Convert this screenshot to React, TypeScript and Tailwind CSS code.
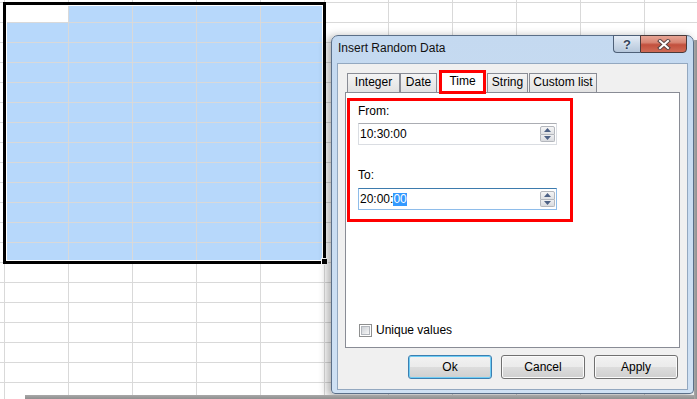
import React from "react";

const ROWS = 21;
const COLS = 12;

function cellClass(r: number, c: number) {
  if (r === 1 && c === 1) return "border-r border-b border-[#d9d9d9] bg-white";
  if (r >= 1 && r <= 13 && c >= 1 && c <= 5) return "border-r border-b border-[#d9d9d9] bg-[#b7d8fb]";
  return "border-r border-b border-[#d9d9d9] bg-white";
}

function Sheet() {
  const cells = [];
  for (let r = 0; r < ROWS; r++) {
    for (let c = 0; c < COLS; c++) {
      cells.push(<div key={`${r}-${c}`} className={cellClass(r, c)} />);
    }
  }
  return (
    <div className="relative">
      <div className="grid grid-cols-[5px_repeat(11,64px)] grid-rows-[3px_repeat(20,20px)]">{cells}</div>
      {/* selection outline + fill handle */}
      <div className="absolute left-[3px] top-[2px] h-[262px] w-[323px] border-[3px] border-black shadow-[inset_0_0_0_1px_#ffffff]" />
      <div className="absolute left-[321px] top-[258px] h-[7px] w-[7px] border border-white bg-black" />
    </div>
  );
}

function Spin() {
  return (
    <div className="mr-[1px] flex h-[16px] w-[15px] flex-col">
      <div className="flex flex-1 items-center justify-center rounded-t-[2px] border border-[#b4b7bd] bg-linear-to-b from-[#f5f5f5] to-[#dfe1e4]">
        <svg width="7" height="4" viewBox="0 0 7 4">
          <path d="M0 4 L3.5 0 L7 4 Z" fill="#4d6185" />
        </svg>
      </div>
      <div className="flex flex-1 items-center justify-center rounded-b-[2px] border border-t-0 border-[#b4b7bd] bg-linear-to-b from-[#eeeff1] to-[#d9dbdf]">
        <svg width="7" height="4" viewBox="0 0 7 4">
          <path d="M0 0 L3.5 4 L7 0 Z" fill="#4d6185" />
        </svg>
      </div>
    </div>
  );
}

function TimeField({ focused }: { focused: boolean }) {
  return (
    <div
      className={
        focused
          ? "flex h-[22px] w-[199px] items-center border border-[#8ebcea] border-t-[#3d7bad] bg-white"
          : "flex h-[22px] w-[199px] items-center border border-[#dadde2] border-t-[#abadb3] bg-white"
      }
    >
      <div className="flex flex-1 items-center pl-[1px] text-[12px] leading-[15px] text-black">
        {focused ? (
          <>
            <span>20:00:</span>
            <span className="bg-[#3399ff] leading-[13px] text-white">00</span>
          </>
        ) : (
          <span>10:30:00</span>
        )}
      </div>
      <Spin />
    </div>
  );
}

function Tab({ label, width }: { label: string; width: string }) {
  return (
    <div
      className={`${width} h-[19px] border border-b-0 border-[#898c95] bg-linear-to-b from-[#f4f4f4] to-[#e2e2e2] text-center text-[12px] leading-[17px] text-black`}
    >
      {label}
    </div>
  );
}

function Button({ label, isDefault }: { label: string; isDefault?: boolean }) {
  return (
    <div
      className={
        isDefault
          ? "flex h-[24px] w-[84px] items-center justify-center rounded-[3px] border border-[#3c7fb1] bg-[linear-gradient(#f2f2f2,#ebebeb_50%,#dddddd_50%,#cfcfcf)] text-[12px] text-black shadow-[inset_0_0_0_1px_#6fcdf5]"
          : "flex h-[24px] w-[84px] items-center justify-center rounded-[3px] border border-[#707070] bg-[linear-gradient(#f2f2f2,#ebebeb_50%,#dddddd_50%,#cfcfcf)] text-[12px] text-black shadow-[inset_0_0_0_1px_#fbfbfb]"
      }
    >
      {label}
    </div>
  );
}

function Dialog() {
  return (
    <div className="absolute left-[331px] top-[35px] flex h-[359px] w-[363px] flex-col rounded-t-[7px] rounded-b-[4px] border border-[#5b6f88] bg-linear-to-b from-[#c4d9f0] to-[#cfe1f4] px-[5px] pb-[3px] shadow-[-3px_2px_8px_1px_rgba(0,0,0,0.3)]">
      {/* title bar */}
      <div className="flex h-[27px] items-start">
        <div className="pl-[1px] pt-[5px] text-[12px] leading-[15px] text-[#111]">Insert Random Data</div>
        <div className="-mt-[1px] ml-auto mr-[1px] flex h-[18px]">
          <div className="flex w-[27px] items-center justify-center rounded-bl-[4px] border border-r-0 border-[#4e6078] bg-linear-to-b from-[#e6edf6] via-[#ccd9e8] to-[#b6c7db] text-[13px] font-bold leading-none text-[#33435a] [text-shadow:0_0_2px_#ffffff]">
            ?
          </div>
          <div className="flex w-[47px] items-center justify-center rounded-br-[4px] border border-[#4a3a3a] bg-[linear-gradient(#e8a595,#d88674_40%,#c2503d_55%,#d06b55)]">
            <svg width="14" height="11" viewBox="0 0 14 11">
              <path d="M3 2 L11 9 M11 2 L3 9" stroke="#5a4444" strokeWidth="4" strokeLinecap="square" />
              <path d="M3 2 L11 9 M11 2 L3 9" stroke="#ffffff" strokeWidth="2" strokeLinecap="square" />
            </svg>
          </div>
        </div>
      </div>

      {/* client area */}
      <div className="flex flex-1 flex-col border border-[#93a8c0] bg-[#f0f0f0] px-[7px] pt-[6px]">
        <div className="flex h-[22px] items-end pl-[2px]">
          <Tab label="Integer" width="w-[53px]" />
          <Tab label="Date" width="w-[37px]" />
          <div className="relative z-10 -mb-[2px] ml-[2px] h-[24px] w-[47px] border-[3px] border-[#ff0000] bg-white text-center text-[12px] leading-[17px] text-black">
            Time
          </div>
          <div className="ml-[1px]">
            <Tab label="String" width="w-[41px]" />
          </div>
          <div className="ml-[1px]">
            <Tab label="Custom list" width="w-[68px]" />
          </div>
        </div>

        <div className="flex h-[256px] flex-col border border-[#898c95] bg-white">
          <div className="ml-[1px] mt-[5px] h-[124px] w-[226px] border-[3px] border-[#ff0000] pl-[8px] pt-[3px]">
            <div className="text-[12px] leading-[15px] text-black">From:</div>
            <div className="mt-[4px]">
              <TimeField focused={false} />
            </div>
            <div className="mt-[23px] text-[12px] leading-[15px] text-black">To:</div>
            <div className="mt-[5px]">
              <TimeField focused={true} />
            </div>
          </div>

          <div className="mb-[9px] mt-auto flex items-center gap-[4px] pl-[13px]">
            <div className="h-[13px] w-[13px] border border-[#8e8f8f] bg-white p-[1px]">
              <div className="h-full w-full border border-[#b3b7bd] bg-linear-to-br from-[#cdd1d6] to-[#f7f7f7]" />
            </div>
            <span className="text-[12px] leading-[15px] text-black">Unique values</span>
          </div>
        </div>

        <div className="mt-[7px] flex justify-end gap-[9px] pr-[2px]">
          <Button label="Ok" isDefault />
          <Button label="Cancel" />
          <Button label="Apply" />
        </div>
      </div>
    </div>
  );
}

export default function App() {
  return (
    <div className="relative h-[399px] w-[697px] overflow-hidden bg-white font-['Liberation_Sans',Arial,sans-serif]">
      <Sheet />
      <Dialog />
      {/* screenshot edge shadow */}
      <div className="absolute bottom-0 left-[25px] right-0 h-[4px] bg-linear-to-b from-[#a8a8a8] to-[#8f8f8f]" />
      <div className="absolute bottom-0 right-0 top-[40px] w-[3px] bg-linear-to-r from-[#a8a8a8] to-[#8f8f8f]" />
    </div>
  );
}
